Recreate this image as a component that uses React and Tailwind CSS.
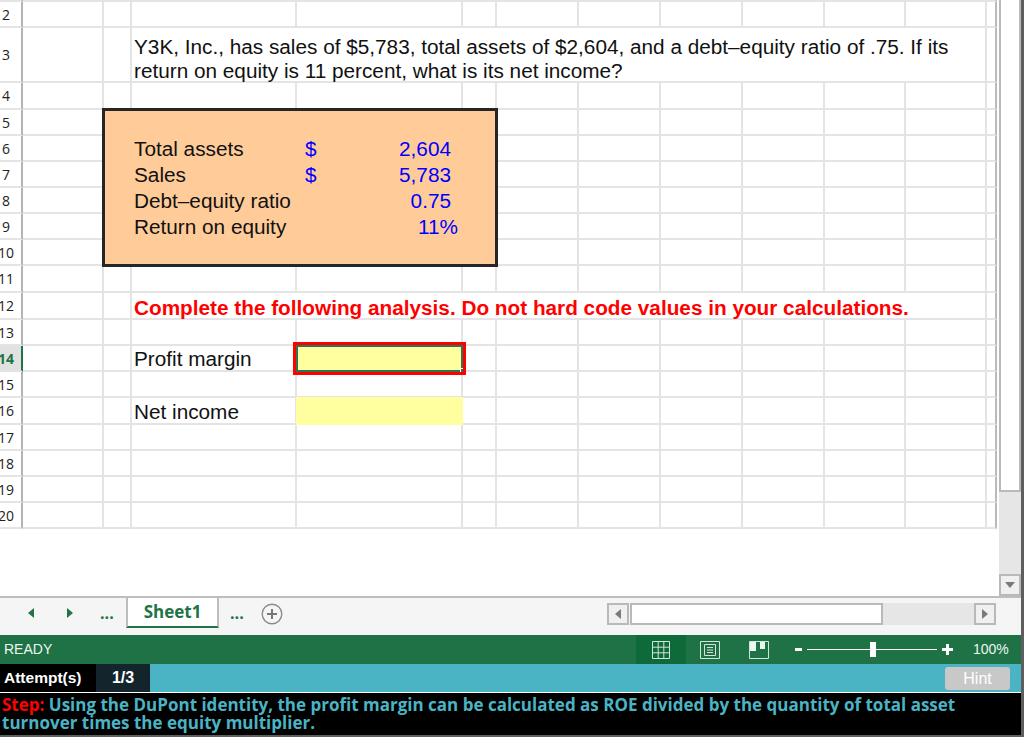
import React from 'react';

const rowHeights = [2, 26, 55, 27, 26, 26, 26, 26, 26, 26, 27, 27, 26, 26, 26, 27, 26, 26, 26, 26];
const mergedRows = { 3: true, 12: true };

function Cell({ row, col }) {
  // merged rows only have the one wide cell, from col 4 to col 12
  if (mergedRows[row] && col > 4 && col < 13) return null;
  const wide = mergedRows[row] && col === 4;
  const last = col === 13;
  return (
    <div
      className={`border-b-2 border-[#e4e4e4] ${last ? 'border-r-2 border-r-[#b9b9b9]' : 'border-r-2'}`}
      style={{ gridRow: row, gridColumn: wide ? '4 / 13' : col }}
    />
  );
}

function RowHeader({ row }) {
  const active = row === 14;
  return (
    <div
      className={`flex items-center overflow-hidden border-b-2 border-b-[#e4e4e4] border-r-2 font-['Open_Sans',sans-serif] text-[14px] ${
        active ? 'bg-[#e1e1e1] border-r-[#217346] font-bold text-[#217346]' : 'border-r-[#b4b4b4] text-[#222]'
      }`}
      style={{ gridRow: row, gridColumn: 1 }}
    >
      {row > 1 && <div className="flex w-[12px] shrink-0 justify-center">{row}</div>}
    </div>
  );
}

function Sheet() {
  const rows = rowHeights.map((_, i) => i + 1);
  const cols = [2, 3, 4, 5, 6, 7, 8, 9, 10, 11, 12, 13];
  return (
    <div className="grid h-[529px] w-[997px] grid-cols-[23px_81px_28px_165px_166px_34px_82px_82px_82px_82px_81px_81px_10px] grid-rows-[2px_26px_55px_27px_26px_26px_26px_26px_26px_26px_27px_27px_26px_26px_26px_27px_26px_26px_26px_26px] font-['Liberation_Sans',sans-serif] text-[20.75px] text-[#111]">
      {rows.map((row) => (
        <React.Fragment key={row}>
          <RowHeader row={row} />
          {cols.map((col) => (
            <Cell key={col} row={row} col={col} />
          ))}
        </React.Fragment>
      ))}

      <div className="col-start-4 col-end-13 row-start-3 flex flex-col justify-center pt-[7px] pl-[2px] leading-[24px]">
        <p>Y3K, Inc., has sales of $5,783, total assets of $2,604, and a debt–equity ratio of .75. If its</p>
        <p>return on equity is 11 percent, what is its net income?</p>
      </div>

      <div className="col-start-3 col-end-7 row-start-5 row-end-11 -mt-[2px] -ml-[2px] -mr-px -mb-px border-[3px] border-[#262626] bg-[#ffcc99]" />

      <div className="col-start-4 row-start-6 flex items-center pl-[2px]">Total assets</div>
      <div className="col-start-4 row-start-7 flex items-center pl-[2px]">Sales</div>
      <div className="col-start-4 row-start-8 flex items-center pl-[2px]">Debt–equity ratio</div>
      <div className="col-start-4 row-start-9 flex items-center pl-[2px]">Return on equity</div>

      <div className="col-start-5 row-start-6 flex items-center justify-between pl-[8px] pr-[12px] text-[#0000ff]">
        <span>$</span>
        <span>2,604</span>
      </div>
      <div className="col-start-5 row-start-7 flex items-center justify-between pl-[8px] pr-[12px] text-[#0000ff]">
        <span>$</span>
        <span>5,783</span>
      </div>
      <div className="col-start-5 row-start-8 flex items-center justify-end pr-[12px] text-[#0000ff]">0.75</div>
      <div className="col-start-5 row-start-9 flex items-center justify-end pr-[5px] text-[#0000ff]">11%</div>

      <div className="col-start-4 col-end-13 row-start-12 flex items-center pt-[2px] pl-[2px] font-bold text-[#ff0000]">
        Complete the following analysis. Do not hard code values in your calculations.
      </div>

      <div className="col-start-4 row-start-14 flex items-center pl-[2px]">Profit margin</div>
      <div className="col-start-4 row-start-16 flex items-center pl-[2px]">Net income</div>

      <div className="relative col-start-5 row-start-14 -mt-[4px] -ml-[4px] -mr-[3px] -mb-[3px] border-[3px] border-[#ff0000]">
        <div className="h-full border-2 border-[#2f7350] bg-[#ffff9f]" />
        <div className="absolute right-0 bottom-0 h-[4px] w-[3px] border-l border-t border-white bg-[#217346]" />
      </div>
      <div className="col-start-5 row-start-16 -mt-px -ml-px bg-[#ffff9f]" />
    </div>
  );
}

function VerticalScrollbar() {
  return (
    <div className="flex w-[22px] flex-col bg-[#e6e6e6]">
      <div className="h-[492px] border-x-2 border-b-2 border-[#b9b9b9] bg-white" />
      <div className="flex-1" />
      <div className="flex h-[22px] items-center justify-center border-2 border-[#b9b9b9] bg-[#f0f0f0]">
        <svg width="10" height="6" viewBox="0 0 10 6">
          <path d="M0 0h10L5 6z" fill="#7a7a7a" />
        </svg>
      </div>
    </div>
  );
}

function Arrow({ flip, fill = '#217346' }) {
  return (
    <svg width="6" height="10" viewBox="0 0 6 10" className={flip ? 'rotate-180' : ''}>
      <path d="M6 0v10L0 5z" fill={fill} />
    </svg>
  );
}

function TabBar() {
  return (
    <div className="flex h-[39px] items-start border-t-2 border-[#bdbdbd] bg-[#f5f5f5]">
      <div className="flex h-[30px] w-[126px] items-center font-['Open_Sans',sans-serif] font-bold text-[#217346]">
        <div className="ml-[28px] flex w-[45px] justify-between">
          <Arrow />
          <Arrow flip />
        </div>
        <span className="ml-[27px] text-[16px] leading-none">...</span>
      </div>
      <div className="-mt-[2px] flex h-[32px] w-[93px] items-center justify-center border-x-2 border-t-2 border-b-2 border-x-[#bdbdbd] border-t-[#bdbdbd] border-b-[#217346] bg-white font-['Open_Sans',sans-serif] text-[17px] font-bold text-[#217346]">
        Sheet1
      </div>
      <div className="flex h-[30px] items-center font-['Open_Sans',sans-serif] font-bold text-[#217346]">
        <span className="ml-[11px] text-[16px] leading-none">...</span>
        <svg width="22" height="22" viewBox="0 0 22 22" className="ml-[17px] mt-[2px]">
          <circle cx="11" cy="11" r="9.8" fill="#f5f5f5" stroke="#8c8c8c" strokeWidth="1.4" />
          <path d="M11 6v10M6 11h10" stroke="#777" strokeWidth="2" />
        </svg>
      </div>
      <div className="ml-[324px] mt-[5px] flex h-[22px] w-[389px]">
        <div className="flex w-[22px] items-center justify-center border-2 border-[#b9b9b9] bg-[#f0f0f0]">
          <Arrow fill="#7a7a7a" />
        </div>
        <div className="ml-px w-[253px] border-2 border-[#b9b9b9] bg-white" />
        <div className="flex-1 bg-[#e6e6e6]" />
        <div className="flex w-[22px] items-center justify-center border-2 border-[#b9b9b9] bg-[#f0f0f0]">
          <Arrow flip fill="#7a7a7a" />
        </div>
      </div>
    </div>
  );
}

function StatusBar() {
  return (
    <div className="flex h-[29px] items-center bg-[#1f7246] font-['Liberation_Sans',sans-serif] text-[14px] text-[#eef5f1]">
      <span className="pl-[4px]">READY</span>
      <div className="ml-auto flex h-full items-center">
        <div className="flex h-full w-[50px] items-center justify-center bg-[#0f6a3a]">
          <svg width="18" height="18" viewBox="0 0 18 18" fill="none" stroke="#d3e4da" strokeWidth="1">
            <path d="M.5.5h17v17H.5zM6.2.5v17M11.8.5v17M.5 6.2h17M.5 11.8h17" />
          </svg>
        </div>
        <svg width="20" height="18" viewBox="0 0 20 18" fill="none" stroke="#d3e4da" strokeWidth="1" className="ml-[14px]">
          <path d="M.5.5h19v17H.5zM4.5 3.5h11v11h-11zM7 6.5h6M7 9h6M7 11.5h6" />
        </svg>
        <svg width="20" height="18" viewBox="0 0 20 18" className="ml-[29px]">
          <path d="M.5.5h19v17H.5z" fill="none" stroke="#d3e4da" />
          <path d="M1 1h6v9H1zM11 1h5v7h-5z" fill="#eef5f1" />
        </svg>
        <div className="ml-[26px] h-[3px] w-[7px] bg-white" />
        <div className="relative ml-[5px] h-px w-[130px] bg-white">
          <div className="absolute top-[-7px] left-[63px] h-[15px] w-[6px] bg-white" />
        </div>
        <svg width="11" height="11" viewBox="0 0 11 11" className="ml-[5px]">
          <path d="M4 0h3v4h4v3H7v4H4V7H0V4h4z" fill="#fff" />
        </svg>
        <span className="ml-[20px] mr-[13px] w-[35px]">100%</span>
      </div>
    </div>
  );
}

function AttemptBar() {
  return (
    <div className="flex h-[28px] items-stretch bg-[#4ab4c4] font-['Liberation_Sans',sans-serif] text-[15.5px] font-bold text-white">
      <div className="flex w-[96px] items-center bg-black pl-[4px]">Attempt(s)</div>
      <div className="flex w-[54px] items-center justify-center bg-[#13242c] text-[16px]">1/3</div>
      <div className="ml-auto mr-[11px] mt-[3px] flex h-[23px] w-[65px] items-center justify-center rounded-[3px] bg-[#c8c8c8] text-[16px] font-normal">
        Hint
      </div>
    </div>
  );
}

function StepBox() {
  return (
    <div className="mt-px h-[42px] bg-black pl-[2px] pt-[3px] font-['Open_Sans',sans-serif] text-[17px] leading-[18px] font-bold text-[#4ab4c4]">
      <span className="text-[#ff0000]">Step: </span>
      Using the DuPont identity, the profit margin can be calculated as ROE divided by the quantity of total asset turnover times the equity multiplier.
    </div>
  );
}

export default function App() {
  return (
    <div className="h-[748px] w-[1024px] overflow-hidden bg-white">
      <div className="flex h-[737px] flex-col border-r-[3px] border-b-2 border-[#5e5e5e]">
        <div className="flex h-[596px] justify-between">
          <Sheet />
          <VerticalScrollbar />
        </div>
        <TabBar />
        <StatusBar />
        <AttemptBar />
        <StepBox />
      </div>
    </div>
  );
}
